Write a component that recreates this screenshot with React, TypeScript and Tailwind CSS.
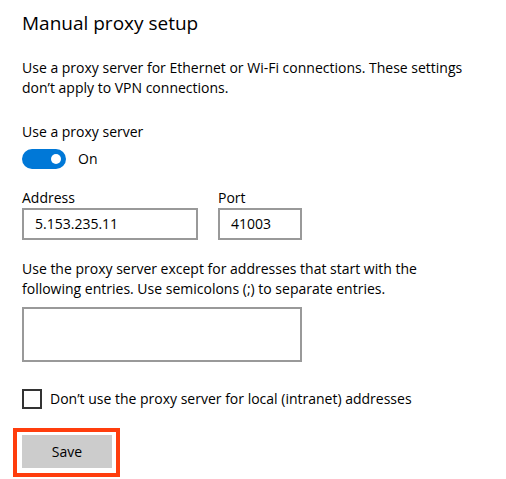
export default function App() {
  return (
    <div className="h-[479px] w-full overflow-hidden bg-white pl-[22px] font-['Open_Sans',sans-serif] text-[14px] leading-[20px] text-black">
      <h1 className="pt-[9px] text-[19px] leading-[28px] font-normal">Manual proxy setup</h1>

      <p className="mt-[21px] w-[460px]">
        Use a proxy server for Ethernet or Wi-Fi connections. These settings don’t apply to VPN
        connections.
      </p>

      <div className="mt-[24px]">Use a proxy server</div>
      <div className="mt-[7px] flex items-center gap-[12px]">
        <div className="flex h-[20px] w-[44px] items-center justify-end rounded-full bg-[#0078d7] pr-[5px]">
          <div className="h-[10px] w-[10px] rounded-full bg-white" />
        </div>
        <span>On</span>
      </div>

      <div className="mt-[19px] flex gap-[20px]">
        <div className="flex flex-col">
          <label>Address</label>
          <div className="flex h-[32px] w-[176px] items-center border-2 border-[#999999] px-[11px]">
            5.153.235.11
          </div>
        </div>
        <div className="flex flex-col">
          <label>Port</label>
          <div className="flex h-[32px] w-[84px] items-center border-2 border-[#999999] px-[11px]">
            41003
          </div>
        </div>
      </div>

      <p className="mt-[19px] w-[440px]">
        Use the proxy server except for addresses that start with the following entries. Use
        semicolons (;) to separate entries.
      </p>
      <div className="mt-[8px] h-[55px] w-[280px] border-2 border-[#999999]" />

      <label className="mt-[27px] flex items-center gap-[8px]">
        <span className="h-[20px] w-[20px] border-2 border-[#333333]" />
        <span>Don’t use the proxy server for local (intranet) addresses</span>
      </label>

      <div className="mt-[19px] -ml-[9px] w-[107px] border-4 border-[#ff3d0d] pt-[3px] pr-[4px] pb-[5px] pl-[5px]">
        <button className="block h-[33px] w-full bg-[#cccccc]">Save</button>
      </div>
    </div>
  );
}
